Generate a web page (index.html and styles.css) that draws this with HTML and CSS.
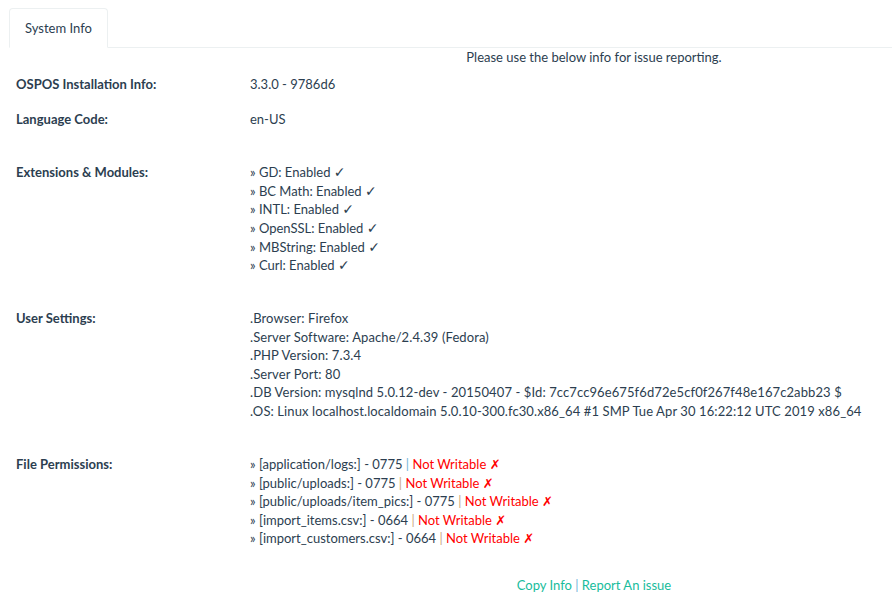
FILE: index.html
```html
<!DOCTYPE html>
<html>
<head>
<meta charset="utf-8">
<link rel="stylesheet" href="styles.css">
</head>
<body>
<div class="page">
  <ul class="tabs">
    <li class="tab active">System Info</li>
  </ul>
  <div class="intro">Please use the below info for issue reporting.</div>

  <div class="row first">
    <div class="label">OSPOS Installation Info:</div>
    <div class="value">3.3.0 - 9786d6</div>
  </div>

  <div class="row spaced lang">
    <div class="label">Language Code:</div>
    <div class="value">en-US</div>
  </div>

  <div class="row spaced">
    <div class="label">Extensions &amp; Modules:</div>
    <div class="value">
      <div class="line">» GD: Enabled <span class="ok">✓</span></div>
      <div class="line">» BC Math: Enabled <span class="ok">✓</span></div>
      <div class="line">» INTL: Enabled <span class="ok">✓</span></div>
      <div class="line">» OpenSSL: Enabled <span class="ok">✓</span></div>
      <div class="line">» MBString: Enabled <span class="ok">✓</span></div>
      <div class="line">» Curl: Enabled <span class="ok">✓</span></div>
    </div>
  </div>

  <div class="row spaced">
    <div class="label">User Settings:</div>
    <div class="value settings">
      <div class="line">.Browser: Firefox</div>
      <div class="line">.Server Software: Apache/2.4.39 (Fedora)</div>
      <div class="line">.PHP Version: 7.3.4</div>
      <div class="line">.Server Port: 80</div>
      <div class="line">.DB Version: mysqlnd 5.0.12-dev - 20150407 - $Id: 7cc7cc96e675f6d72e5cf0f267f48e167c2abb23 $</div>
      <div class="line">.OS: Linux localhost.localdomain 5.0.10-300.fc30.x86_64 #1 SMP Tue Apr 30 16:22:12 UTC 2019 x86_64</div>
    </div>
  </div>

  <div class="row spaced last">
    <div class="label">File Permissions:</div>
    <div class="value">
      <div class="line">» [application/logs:] - 0775 <span class="pipe blue">|</span> <span class="bad">Not Writable <span class="x">✗</span></span></div>
      <div class="line">» [public/uploads:] - 0775 <span class="pipe">|</span> <span class="bad">Not Writable <span class="x">✗</span></span></div>
      <div class="line">» [public/uploads/item_pics:] - 0775 <span class="pipe">|</span> <span class="bad">Not Writable <span class="x">✗</span></span></div>
      <div class="line">» [import_items.csv:] - 0664 <span class="pipe">|</span> <span class="bad">Not Writable <span class="x">✗</span></span></div>
      <div class="line">» [import_customers.csv:] - 0664 <span class="pipe">|</span> <span class="bad">Not Writable <span class="x">✗</span></span></div>
    </div>
  </div>

  <div class="footer">
    <a class="link" href="#">Copy Info</a> <span class="pipe blue">|</span> <a class="link" href="#">Report An issue</a>
  </div>
</div>
</body>
</html>
```

FILE: styles.css
```css
html, body {
  margin: 0;
  padding: 0;
  background: #fff;
}
body {
  font-family: Lato, "Open Sans", sans-serif;
  font-size: 13px;
  line-height: 18.57px;
  color: #2c3e50;
}
.page {
  padding-top: 8px;
}
.tabs {
  list-style: none;
  margin: 0 0 0 9px;
  padding: 0;
  display: flex;
  border-bottom: 1px solid #ecf0f1;
}
.tab {
  height: 40px;
  box-sizing: border-box;
  width: 99px;
  padding: 10px 0 0 15px;
  border: 1px solid #ecf0f1;
  border-bottom-color: transparent;
  border-radius: 4px 4px 0 0;
  margin-bottom: -1px;
  background: #fff;
  color: #2c3e50;
}
.intro {
  padding-left: 296px;
  text-align: center;
}
.row {
  display: grid;
  grid-template-columns: 234px 1fr;
  padding-left: 16px;
}
.row.first {
  margin-top: 8px;
}
.row.spaced {
  margin-top: 16px;
}
.row.lang {
  margin-top: 17px;
}
.row.spaced .value {
  padding-bottom: 18.57px;
}
.row.last .value {
  padding-bottom: 0;
}
.line {
  height: 18.57px;
  white-space: nowrap;
}
.settings {
  letter-spacing: 0.1px;
}
.label {
  font-weight: bold;
}
.ok {
  font-family: "DejaVu Sans", sans-serif;
  font-size: 14px;
  line-height: 1;
}
.bad {
  color: #ff0000;
}
.x {
  font-family: "DejaVu Sans", sans-serif;
  font-size: 13px;
  font-style: italic;
  line-height: 1;
}
.pipe {
  color: #c9a77c;
}
.pipe.blue {
  color: #6fb3d8;
}
.footer {
  margin-top: 28px;
  padding-left: 296px;
  text-align: center;
}
.link {
  color: #18bc9c;
  text-decoration: none;
}
```
